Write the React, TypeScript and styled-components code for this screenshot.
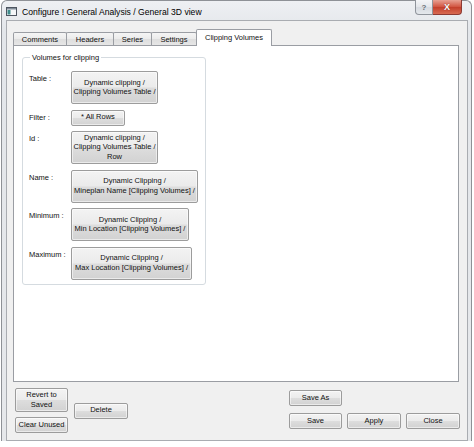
import React from 'react'
import styled, { createGlobalStyle } from 'styled-components'

const GlobalStyle = createGlobalStyle`
  html, body {
    margin: 0;
    padding: 0;
    background: #ffffff;
  }
  body {
    font-family: 'Liberation Sans', Arial, sans-serif;
    font-size: 7.5px;
    color: #111;
  }
`

const Window = styled.div`
  box-sizing: border-box;
  width: 471px;
  margin-left: 1px;
  padding: 0 3px 0 4px;
  background: linear-gradient(#eef0f3, #e3e6ea 30px, #e6e8eb);
  border: 1px solid #8e9196;
  border-bottom: none;
  border-radius: 6px 6px 0 0;
`

const TitleBar = styled.div`
  display: flex;
  align-items: flex-start;
  height: 19px;
`

const TitleIcon = styled.svg`
  flex: none;
  margin-top: 6px;
  width: 11px;
  height: 9px;
`

const TitleText = styled.div`
  margin: 5px 0 0 5px;
  font-size: 8.6px;
  line-height: 12px;
  color: #000;
`

const CaptionButtons = styled.div`
  display: flex;
  margin: -1px 6px 0 auto;
`

const CaptionButton = styled.div<{ $close?: boolean }>`
  box-sizing: border-box;
  display: flex;
  align-items: center;
  justify-content: center;
  height: 15px;
  width: ${(p) => (p.$close ? '29px' : '18px')};
  border: 1px solid ${(p) => (p.$close ? '#8d3a33' : '#8f949b')};
  border-top: none;
  border-left: ${(p) => (p.$close ? 'none' : undefined)};
  border-radius: ${(p) => (p.$close ? '0 0 4px 0' : '0 0 0 4px')};
  background: ${(p) =>
    p.$close
      ? 'linear-gradient(#e8a193, #d1533f 50%, #c33f2b 51%, #d86a52)'
      : 'linear-gradient(#f4f5f7, #e3e6ea 50%, #d6dae0 51%, #e4e8ec)'};
  color: ${(p) => (p.$close ? '#fff' : '#6b7078')};
  font-size: ${(p) => (p.$close ? '9px' : '8px')};
  font-weight: bold;
  text-shadow: ${(p) => (p.$close ? '0 0 1px #6a1f15' : 'none')};
`

const Client = styled.div`
  box-sizing: border-box;
  display: flex;
  flex-direction: column;
  height: 421px;
  padding: 8px 8px 0 6px;
  background: #f0f0f0;
  border: 1px solid #a9acb1;
`

const TabBar = styled.div`
  display: flex;
  align-items: flex-end;
  height: 16px;
  padding-left: 1px;
`

const Tab = styled.div<{ $width: number; $active?: boolean }>`
  box-sizing: border-box;
  display: flex;
  align-items: center;
  justify-content: center;
  width: ${(p) => p.$width}px;
  height: ${(p) => (p.$active ? 17 : 13)}px;
  margin-left: -1px;
  margin-bottom: ${(p) => (p.$active ? -1 : 0)}px;
  padding-bottom: ${(p) => (p.$active ? 2 : 0)}px;
  position: relative;
  z-index: ${(p) => (p.$active ? 1 : 0)};
  border: 1px solid #9a9da3;
  border-bottom: none;
  border-radius: 2px 2px 0 0;
  background: ${(p) =>
    p.$active ? '#ffffff' : 'linear-gradient(#f5f5f5, #ebebeb 50%, #dedede 51%, #e6e6e6)'};
  color: #111;
  white-space: nowrap;
`

const Pane = styled.div`
  box-sizing: border-box;
  height: 337px;
  padding: 0 0 0 8px;
  background: #ffffff;
  border: 1px solid #9a9da3;
`

const GroupBox = styled.fieldset`
  box-sizing: border-box;
  width: 184px;
  height: 233px;
  margin: 6px 0 0 0;
  padding: 0 0 0 6px;
  border: 1px solid #d5dbe0;
  border-radius: 3px;
`

const GroupTitle = styled.legend`
  margin-left: 1px;
  padding: 0 2px;
  line-height: 11px;
  color: #111;
`

const FieldGrid = styled.div`
  display: grid;
  grid-template-columns: 42px auto;
  row-gap: 5.5px;
  padding-top: 8px;
`

const FieldLabel = styled.div`
  padding-top: 3px;
  line-height: 9px;
  white-space: nowrap;
`

const Button = styled.div<{ $width: number; $height: number }>`
  box-sizing: border-box;
  display: flex;
  flex-direction: column;
  align-items: center;
  justify-content: center;
  width: ${(p) => p.$width}px;
  height: ${(p) => p.$height}px;
  padding-bottom: 1px;
  border: 1px solid #9c9c9c;
  border-radius: 2px;
  background: linear-gradient(#f3f3f3, #ebebeb 48%, #dddddd 52%, #d2d2d2);
  box-shadow: inset 0 0 0 1px rgba(255, 255, 255, 0.55);
  line-height: 9.5px;
  text-align: center;
  white-space: nowrap;
  color: #111;
`

const BottomBar = styled.div`
  display: flex;
  align-items: flex-start;
  margin-top: 6px;
  padding-left: 2px;
`

const LeftStack = styled.div`
  display: flex;
  flex-direction: column;
  gap: 5px;
`

const MiddleSlot = styled.div`
  display: flex;
  align-items: center;
  height: 45px;
  margin-left: 6px;
`

const RightStack = styled.div`
  display: flex;
  flex-direction: column;
  gap: 7px;
  margin: 2px -1px 0 auto;
`

const ButtonRow = styled.div`
  display: flex;
  gap: 5px;
`

const tabs = [
  { label: 'Comments', width: 54 },
  { label: 'Headers', width: 48 },
  { label: 'Series', width: 39 },
  { label: 'Settings', width: 46 },
  { label: 'Clipping Volumes', width: 76, active: true },
]

const fields = [
  { label: 'Table :', lines: ['Dynamic clipping /', 'Clipping Volumes Table /'], width: 87, height: 33 },
  { label: 'Filter :', lines: ['* All Rows'], width: 54, height: 16 },
  { label: 'Id :', lines: ['Dynamic clipping /', 'Clipping Volumes Table /', 'Row'], width: 87, height: 33 },
  { label: 'Name :', lines: ['Dynamic Clipping /', 'Mineplan Name [Clipping Volumes] /'], width: 127, height: 33 },
  { label: 'Minimum :', lines: ['Dynamic Clipping /', 'Min Location [Clipping Volumes] /'], width: 118, height: 33 },
  { label: 'Maximum :', lines: ['Dynamic Clipping /', 'Max Location [Clipping Volumes] /'], width: 121, height: 33 },
]

const App: React.FC = () => {
  return (
    <>
      <GlobalStyle />
      <Window>
        <TitleBar>
          <TitleIcon viewBox='0 0 11 9'>
            <rect x='0.5' y='0.5' width='10' height='8' fill='#f4f6f8' stroke='#4d5560' />
            <rect x='1' y='1' width='9' height='1.5' fill='#7f8a96' />
            <rect x='1.5' y='3' width='3' height='4.5' fill='#3f8c8c' />
          </TitleIcon>
          <TitleText>Configure ! General Analysis / General 3D view</TitleText>
          <CaptionButtons>
            <CaptionButton>?</CaptionButton>
            <CaptionButton $close>X</CaptionButton>
          </CaptionButtons>
        </TitleBar>
        <Client>
          <TabBar>
            {tabs.map((t) => (
              <Tab key={t.label} $width={t.width} $active={t.active}>
                {t.label}
              </Tab>
            ))}
          </TabBar>
          <Pane>
            <GroupBox>
              <GroupTitle>Volumes for clipping</GroupTitle>
              <FieldGrid>
                {fields.map((f) => (
                  <React.Fragment key={f.label}>
                    <FieldLabel>{f.label}</FieldLabel>
                    <Button $width={f.width} $height={f.height}>
                      {f.lines.map((l) => (
                        <div key={l}>{l}</div>
                      ))}
                    </Button>
                  </React.Fragment>
                ))}
              </FieldGrid>
            </GroupBox>
          </Pane>
          <BottomBar>
            <LeftStack>
              <Button $width={53} $height={24}>
                <div>Revert to</div>
                <div>Saved</div>
              </Button>
              <Button $width={53} $height={16}>
                Clear Unused
              </Button>
            </LeftStack>
            <MiddleSlot>
              <Button $width={54} $height={16}>
                Delete
              </Button>
            </MiddleSlot>
            <RightStack>
              <Button $width={53} $height={16}>
                Save As
              </Button>
              <ButtonRow>
                <Button $width={53} $height={16}>
                  Save
                </Button>
                <Button $width={54} $height={16}>
                  Apply
                </Button>
                <Button $width={54} $height={16}>
                  Close
                </Button>
              </ButtonRow>
            </RightStack>
          </BottomBar>
        </Client>
      </Window>
    </>
  )
}

export default App
